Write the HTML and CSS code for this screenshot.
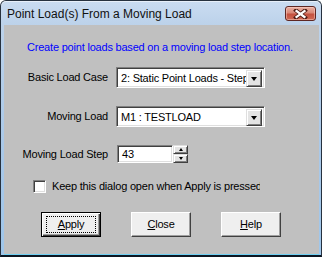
FILE: index.html
```html
<!DOCTYPE html>
<html>
<head>
<meta charset="utf-8">
<link rel="stylesheet" href="styles.css">
</head>
<body>
<div class="window">
  <div class="titlebar">
    <span class="title">Point Load(s) From a Moving Load</span>
    <div class="close-btn">
      <svg width="17" height="10" viewBox="0 0 17 10">
        <path d="M4 1.5 L13 8.5 M13 1.5 L4 8.5" stroke="#4a1a14" stroke-width="4" stroke-linecap="square"/>
        <path d="M4.5 2 L12.5 8 M12.5 2 L4.5 8" stroke="#ffffff" stroke-width="2.2" stroke-linecap="square"/>
      </svg>
    </div>
  </div>
  <div class="client">
    <p class="intro">Create point loads based on a moving load step location.</p>
    <div class="form">
      <div class="row">
        <label class="lbl">Basic Load Case</label>
        <div class="combo">
          <span class="combo-text">2: Static Point Loads - Step</span>
          <span class="drop"><span class="tri-down"></span></span>
        </div>
      </div>
      <div class="row">
        <label class="lbl">Moving Load</label>
        <div class="combo">
          <span class="combo-text">M1 : TESTLOAD</span>
          <span class="drop"><span class="tri-down"></span></span>
        </div>
      </div>
      <div class="row row-spin">
        <label class="lbl">Moving Load Step</label>
        <div class="spin">
          <span class="spin-field">43</span>
          <span class="spin-btns">
            <span class="spin-btn"><span class="tri-up-s"></span></span>
            <span class="spin-btn"><span class="tri-down-s"></span></span>
          </span>
        </div>
      </div>
    </div>
    <div class="check-row">
      <span class="checkbox"></span>
      <span class="check-text">Keep this dialog open when Apply is pressed</span>
    </div>
    <div class="buttons">
      <div class="btn btn-default"><span class="focus"><u>A</u>pply</span></div>
      <div class="btn"><span class="focus-none"><u>C</u>lose</span></div>
      <div class="btn"><span class="focus-none"><u>H</u>elp</span></div>
    </div>
  </div>
</div>
</body>
</html>
```

FILE: styles.css
```css
html, body {
  margin: 0;
  padding: 0;
}
body {
  width: 322px;
  height: 257px;
  overflow: hidden;
  font-family: "Liberation Sans", Arial, sans-serif;
}
.window {
  box-sizing: border-box;
  width: 322px;
  height: 257px;
  border: 1px solid #26313f;
  border-bottom-width: 2px;
  border-bottom-color: #0b1622;
  border-radius: 6px 6px 0 0;
  background: linear-gradient(to bottom, #cadcf1 0, #bcd2ea 24px, #a9c8e8 60%, #9fc6ea 100%);
  padding: 0 2px 1px 3px;
  display: flex;
  flex-direction: column;
}
.titlebar {
  height: 24px;
  margin: 0 -2px 0 -3px;
  padding: 0 5px 0 6px;
  display: flex;
  align-items: flex-start;
  justify-content: space-between;
  border-radius: 5px 5px 0 0;
  box-shadow: inset 0 1px 0 rgba(255,255,255,0.55);
}
.title {
  font-size: 12px;
  line-height: 14px;
  margin-top: 6px;
  color: #111;
}
.close-btn {
  box-sizing: border-box;
  width: 31px;
  height: 15px;
  margin-top: 5px;
  border: 1px solid #5e2723;
  border-radius: 3px;
  background: linear-gradient(to bottom, #eab0a3 0, #d98877 45%, #c4513f 55%, #cf6a55 100%);
  box-shadow: inset 0 0 0 1px rgba(255,220,210,0.45);
  display: flex;
  align-items: center;
  justify-content: center;
}
.close-btn svg {
  display: block;
}
.client {
  flex: 1;
  background: #c0c0c0;
  box-shadow: 0 1px 0 #6fd0f3;
  font-size: 11px;
  letter-spacing: -0.2px;
  color: #000;
  display: flex;
  flex-direction: column;
}
.intro {
  margin: 16px 0 0 23px;
  line-height: 13px;
  color: #0000ff;
}
.form {
  margin-top: 13px;
  display: flex;
  flex-direction: column;
  gap: 18px;
}
.row {
  display: flex;
  align-items: center;
  height: 21px;
}
.row-spin {
  height: 18px;
}
.lbl {
  width: 104px;
  text-align: right;
  margin-right: 8px;
  line-height: 13px;
}
.combo {
  box-sizing: border-box;
  width: 149px;
  height: 21px;
  background: #fff;
  border-top: 1px solid #808080;
  border-left: 1px solid #808080;
  border-right: 1px solid #ffffff;
  border-bottom: 1px solid #ffffff;
  box-shadow: inset 1px 1px 0 #404040, inset -1px -1px 0 #dfdfdf;
  padding: 2px 2px 2px 2px;
  display: flex;
  align-items: stretch;
}
.combo-text {
  flex: 1;
  overflow: hidden;
  white-space: nowrap;
  padding-left: 2px;
  line-height: 17px;
}
.drop {
  box-sizing: border-box;
  width: 16px;
  height: 17px;
  background: #e4e4e4;
  border-top: 1px solid #dfdfdf;
  border-left: 1px solid #dfdfdf;
  border-right: 1px solid #404040;
  border-bottom: 1px solid #404040;
  box-shadow: inset 1px 1px 0 #ffffff, inset -1px -1px 0 #808080;
  display: flex;
  align-items: center;
  justify-content: center;
}
.tri-down {
  width: 0;
  height: 0;
  border-left: 3.5px solid transparent;
  border-right: 3.5px solid transparent;
  border-top: 4px solid #000;
  margin-top: 1px;
}
.spin {
  display: flex;
  height: 18px;
  margin-left: 1px;
}
.spin-field {
  box-sizing: border-box;
  width: 56px;
  height: 18px;
  background: #fff;
  border-top: 1px solid #808080;
  border-left: 1px solid #808080;
  border-right: 1px solid #ffffff;
  border-bottom: 1px solid #ffffff;
  box-shadow: inset 1px 1px 0 #404040, inset -1px -1px 0 #dfdfdf;
  padding-left: 4px;
  line-height: 16px;
}
.spin-btns {
  display: flex;
  flex-direction: column;
  width: 15px;
  height: 18px;
}
.spin-btn {
  box-sizing: border-box;
  flex: 1;
  background: #e4e4e4;
  border-top: 1px solid #dfdfdf;
  border-left: 1px solid #dfdfdf;
  border-right: 1px solid #404040;
  border-bottom: 1px solid #404040;
  box-shadow: inset 1px 1px 0 #ffffff, inset -1px -1px 0 #808080;
  display: flex;
  align-items: center;
  justify-content: center;
}
.tri-up-s {
  width: 0;
  height: 0;
  border-left: 2.5px solid transparent;
  border-right: 2.5px solid transparent;
  border-bottom: 3px solid #000;
}
.tri-down-s {
  width: 0;
  height: 0;
  border-left: 2.5px solid transparent;
  border-right: 2.5px solid transparent;
  border-top: 3px solid #000;
}
.check-row {
  margin: 17px 0 0 29px;
  display: flex;
  align-items: center;
  height: 13px;
}
.checkbox {
  box-sizing: border-box;
  width: 13px;
  height: 13px;
  background: #fff;
  border-top: 1px solid #808080;
  border-left: 1px solid #808080;
  border-right: 1px solid #ffffff;
  border-bottom: 1px solid #ffffff;
  box-shadow: inset 1px 1px 0 #404040, inset -1px -1px 0 #dfdfdf;
}
.check-text {
  margin-left: 6px;
  width: 208px;
  overflow: hidden;
  white-space: nowrap;
  line-height: 13px;
}
.buttons {
  margin: 19px 0 0 37px;
  display: flex;
  gap: 30px;
}
.btn {
  box-sizing: border-box;
  width: 60px;
  height: 25px;
  background: #efefef;
  border-top: 1px solid #ffffff;
  border-left: 1px solid #ffffff;
  border-right: 1px solid #404040;
  border-bottom: 1px solid #404040;
  box-shadow: inset -1px -1px 0 #a0a0a0;
  display: flex;
  align-items: center;
  justify-content: center;
  line-height: 13px;
}
.btn-default {
  border: 1px solid #000;
  box-shadow: inset 1px 1px 0 #ffffff, inset -1px -1px 0 #404040, inset -2px -2px 0 #a0a0a0;
}
.focus {
  box-sizing: border-box;
  width: 50px;
  height: 17px;
  border: 1px dotted #000;
  display: flex;
  align-items: center;
  justify-content: center;
}
.focus-none {
  display: block;
}
u {
  text-decoration: underline;
  text-underline-offset: 1px;
}
```
